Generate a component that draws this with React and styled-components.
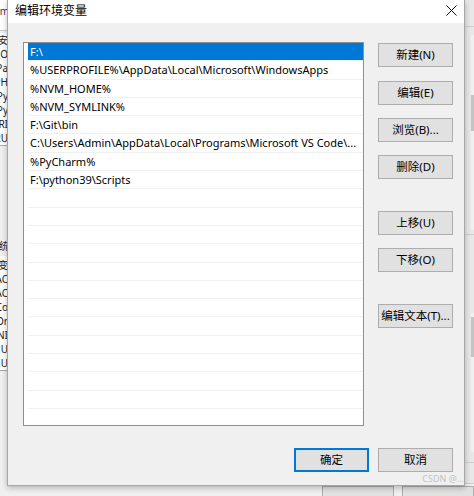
import React from "react";
import styled, { createGlobalStyle } from "styled-components";

const Global = createGlobalStyle`
  html, body { margin: 0; padding: 0; }
  body {
    width: 474px; height: 496px; overflow: hidden; background: #f0f0f0;
    font-family: "Noto Sans", "Noto Sans CJK SC", sans-serif;
  }
`;

const Screen = styled.div`
  position: relative;
  width: 474px;
  height: 496px;
  overflow: hidden;
  background: #f0f0f0;
`;

/* ---------- background window (partly hidden) ---------- */
const Backdrop = styled.div`
  display: flex;
  flex-direction: column;
  width: 100%;
  height: 100%;
`;
const BackMain = styled.div`
  display: flex;
  justify-content: space-between;
  height: 488px;
`;
const LeftStrip = styled.div`
  width: 9px;
  display: flex;
  flex-direction: column;
  background: #f0f0f0;
`;
const BackTitle = styled.div`
  height: 30px;
  background: #fff;
  font-size: 10px;
  color: #4b2a5a;
  line-height: 22px;
  overflow: hidden;
  direction: rtl;
  border-bottom: 1px solid #c8c8c8;
`;
const BackList = styled.div`
  background: #fff;
  border-right: 1px solid #aaa;
  border-bottom: 1px solid #aaa;
  margin-top: ${(p) => p.$top}px;
  padding-top: ${(p) => p.$pad}px;
  display: flex;
  flex-direction: column;
`;
const BackRow = styled.div`
  height: 14px;
  font-size: 10px;
  line-height: 14px;
  color: #222;
  white-space: nowrap;
  overflow: hidden;
  direction: rtl;
`;
const BackLabel = styled.div`
  margin-top: 92px;
  height: 16px;
  font-size: 10px;
  line-height: 16px;
  color: #222;
  white-space: nowrap;
  overflow: hidden;
  direction: rtl;
`;
const RightStrip = styled.div`
  width: 10px;
  background: #e8e8e8;
  display: flex;
  flex-direction: column;
  align-items: flex-end;
`;
const ScrollTrack = styled.div`
  width: 3px;
  margin-top: ${(p) => p.$top}px;
  height: ${(p) => p.$h}px;
  background: #f0f0f0;
  padding-top: ${(p) => p.$thumb}px;
`;
const Thumb = styled.div`
  height: ${(p) => p.$h}px;
  background: #c4c4c4;
`;
const BackRule = styled.div`
  margin-top: ${(p) => p.$top}px;
  width: 10px;
  height: 1px;
  background: #cfcfcf;
`;
const BackBottom = styled.div`
  flex: 1;
  display: flex;
  gap: 8px;
  padding: 2px 0 0 322px;
`;
const BackButton = styled.div`
  width: 72px;
  height: 20px;
  background: #e1e1e1;
  border: 1px solid #adadad;
`;

/* ---------- dialog ---------- */
const Dialog = styled.div`
  position: absolute;
  left: 7px;
  top: 0;
  width: 456px;
  height: 485px;
  display: flex;
  flex-direction: column;
  background: #f0f0f0;
  border: 1px solid #a6a6a6;
  border-top: none;
  box-shadow: 0 2px 6px rgba(0, 0, 0, 0.25);
`;
const TitleBar = styled.div`
  height: 23px;
  box-sizing: border-box;
  background: #fff;
  display: flex;
  align-items: center;
  justify-content: space-between;
  padding: 0 1px 3px 7px;
`;
const Title = styled.span`
  font-family: "Noto Sans CJK SC", sans-serif;
  font-size: 12px;
  color: #000;
  line-height: 1;
`;
const Close = styled.div`
  width: 24px;
  height: 20px;
  display: flex;
  align-items: center;
  justify-content: center;
`;
const Body = styled.div`
  flex: 1;
  display: flex;
  flex-direction: column;
  padding: 19px 11px 0 15px;
`;
const Content = styled.div`
  display: flex;
  gap: 14px;
`;
const ListBox = styled.div`
  flex: 1;
  height: 382px;
  background: #fff;
  border: 1px solid #8e8f8f;
  padding: 0 0 0 4px;
  overflow: hidden;
  display: flex;
  flex-direction: column;
`;
const Row = styled.div`
  flex: none;
  height: 18.3px;
  box-sizing: border-box;
  border-bottom: 1px solid #f0f0f0;
  padding-left: 2px;
  font-size: 11px;
  line-height: 17px;
  white-space: nowrap;
  overflow: hidden;
  color: ${(p) => (p.$sel ? "#fff" : "#000")};
  background: ${(p) => (p.$sel ? "#0078d7" : "#fff")};
`;
const Buttons = styled.div`
  width: 75px;
  display: flex;
  flex-direction: column;
  padding-top: 1px;
`;
const Btn = styled.button`
  width: 75px;
  height: 24px;
  margin-top: ${(p) => p.$gap || 0}px;
  box-sizing: border-box;
  padding: 0;
  background: #e1e1e1;
  border: ${(p) => (p.$primary ? "2px solid #0078d7" : "1px solid #adadad")};
  font-family: "Noto Sans", "Noto Sans CJK SC", sans-serif;
  font-size: 11.5px;
  color: #000;
  line-height: 1;
  display: flex;
  align-items: center;
  justify-content: center;
`;
const Footer = styled.div`
  display: flex;
  justify-content: flex-end;
  gap: 9px;
  margin-top: 22px;
`;
const Watermark = styled.div`
  position: absolute;
  right: 10px;
  bottom: 11px;
  font-size: 9px;
  color: rgba(150, 150, 150, 0.55);
  font-family: "Noto Sans", "Noto Sans CJK SC", sans-serif;
`;

const items = [
  "F:\\",
  "%USERPROFILE%\\AppData\\Local\\Microsoft\\WindowsApps",
  "%NVM_HOME%",
  "%NVM_SYMLINK%",
  "F:\\Git\\bin",
  "C:\\Users\\Admin\\AppData\\Local\\Programs\\Microsoft VS Code\\...",
  "%PyCharm%",
  "F:\\python39\\Scripts",
];

const userFrag = ["安", "O", "Pa", "PH", "Py", "Py", "RI", "RU"];
const sysFrag = ["变", "AC", "AC", "Co", "Or", "NI", "NU", "NU"];

export default function App() {
  const rows = [...items, ...Array(14).fill("")];
  return (
    <Screen>
      <Global />
      <Backdrop>
        <BackMain>
          <LeftStrip>
            <BackTitle>m</BackTitle>
            <BackList $top={2} $pad={0}>
              {userFrag.map((t, i) => (
                <BackRow key={i}>{t}</BackRow>
              ))}
            </BackList>
            <BackLabel>统</BackLabel>
            <BackList $top={2} $pad={2}>
              {sysFrag.map((t, i) => (
                <BackRow key={i}>{t}</BackRow>
              ))}
            </BackList>
          </LeftStrip>
          <RightStrip>
            <BackRule $top={26} />
            <ScrollTrack $top={8} $h={135} $thumb={60}>
              <Thumb $h={36} />
            </ScrollTrack>
            <BackRule $top={4} />
            <ScrollTrack $top={78} $h={135} $thumb={4}>
              <Thumb $h={40} />
            </ScrollTrack>
            <BackRule $top={10} />
            <BackRule $top={20} />
          </RightStrip>
        </BackMain>
        <BackBottom>
          <BackButton />
          <BackButton />
        </BackBottom>
      </Backdrop>

      <Dialog>
        <TitleBar>
          <Title>编辑环境变量</Title>
          <Close>
            <svg width="11" height="11" viewBox="0 0 11 11">
              <path d="M0.5 0.5 L10.5 10.5 M10.5 0.5 L0.5 10.5" stroke="#111" strokeWidth="1" fill="none" />
            </svg>
          </Close>
        </TitleBar>
        <Body>
          <Content>
            <ListBox>
              {rows.map((t, i) => (
                <Row key={i} $sel={i === 0}>
                  {t}
                </Row>
              ))}
            </ListBox>
            <Buttons>
              <Btn>新建(N)</Btn>
              <Btn $gap={14}>编辑(E)</Btn>
              <Btn $gap={13}>浏览(B)...</Btn>
              <Btn $gap={13}>删除(D)</Btn>
              <Btn $gap={32}>上移(U)</Btn>
              <Btn $gap={13}>下移(O)</Btn>
              <Btn $gap={32}>编辑文本(T)...</Btn>
            </Buttons>
          </Content>
          <Footer>
            <Btn $primary>确定</Btn>
            <Btn>取消</Btn>
          </Footer>
        </Body>
      </Dialog>
      <Watermark>CSDN @...</Watermark>
    </Screen>
  );
}
